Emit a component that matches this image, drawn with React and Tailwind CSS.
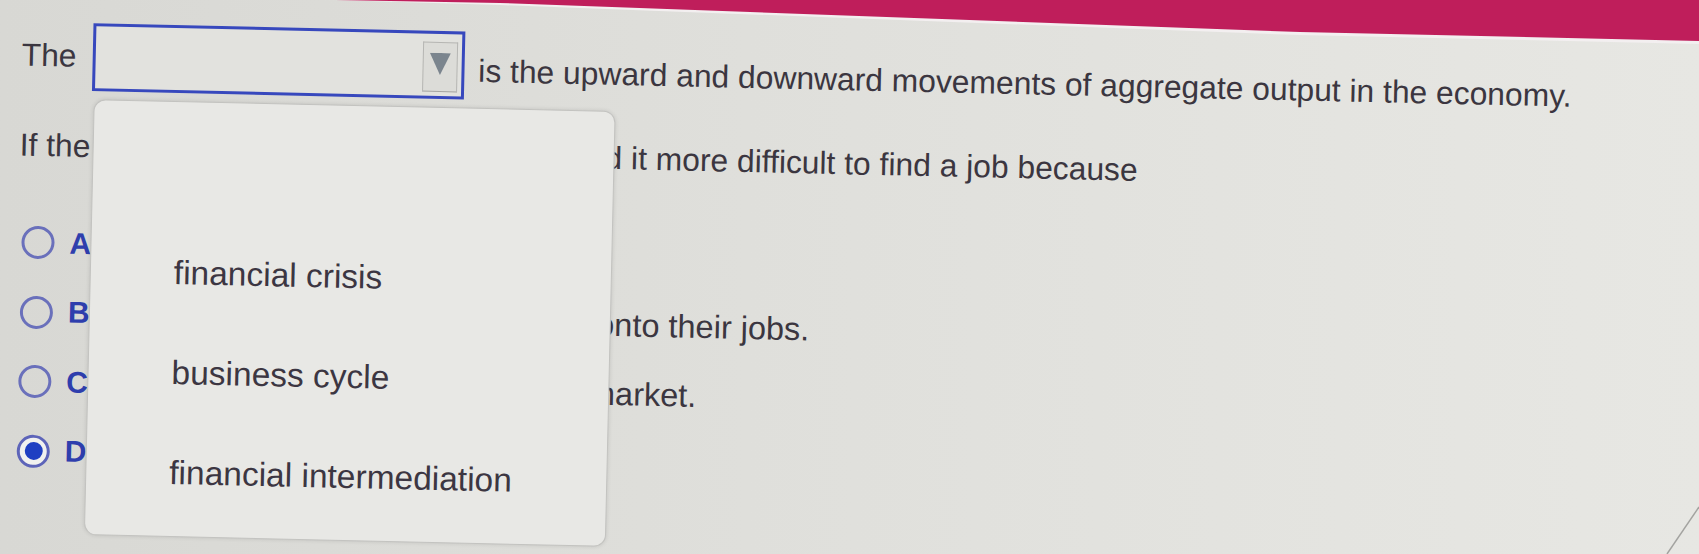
export default function App() {
  const rows = [
    { l: "A", t: "Workers would lose their jobs.", sel: false, gap: "ml-[14px]" },
    { l: "B", t: "People who have jobs would hold onto their jobs.", sel: false, gap: "ml-[16px]" },
    { l: "C", t: "More people would join the labor market.", sel: false, gap: "ml-[22px]" },
    { l: "D", t: "All of the above.", sel: true, gap: "ml-[14px]" },
  ];
  return (
    <div className="relative w-[1699px] h-[554px] overflow-hidden bg-linear-to-r from-[#d8d8d4] via-[#e0e0dc] to-[#e7e7e3] text-[#3b3640] font-['Liberation_Sans',Arial,sans-serif]">
      <div className="relative rotate-[1.3deg] origin-top-left pl-[23px] pt-[21px]">
        <div className="flex items-start text-[31.8px] leading-none">
          <span className="mt-[18px]">The</span>
          <div className="ml-[16px] w-[372px] h-[68px] shrink-0 border-[3px] border-[#3748bd] bg-[#e2e2de] flex items-center justify-end pr-[4px]">
            <div className="w-[35px] h-[50px] mt-[4px] border border-[#b6b6b3] border-b-[#a5a5a2] bg-[#dcdcd8] flex justify-center pt-[10px]">
              <svg width="21" height="22" viewBox="0 0 21 22">
                <polygon points="0,0 21,0 10.5,22" fill="#7b858e" />
              </svg>
            </div>
          </div>
          <span className="ml-[14px] mt-[24px] whitespace-nowrap">
            is the upward and downward movements of aggregate output in the economy.
          </span>
        </div>
        <div className="mt-[40px] text-[31.8px] leading-none whitespace-nowrap">
          If the economy slows down, you would find it more difficult to find a job because
        </div>
        <div className="mt-[46px] flex flex-col">
          {rows.map((r) => (
            <div key={r.l} className="h-[69.5px] flex items-center">
              {r.sel ? (
                <div className="ml-[4px] w-[33px] h-[33px] rounded-full border-[3px] border-[#5d64b9] bg-[#f1f1ef] flex items-center justify-center">
                  <div className="w-[18px] h-[18px] rounded-full bg-[#1f3fc2]" />
                </div>
              ) : (
                <div className="ml-[4px] w-[33px] h-[33px] rounded-full border-[3px] border-[#6a70bb]" />
              )}
              <span className="ml-[15px] w-[21px] font-bold text-[30px] leading-none text-[#2e3ead]">
                {r.l}
              </span>
              <span className={`${r.gap} text-[32.5px] leading-none whitespace-nowrap`}>{r.t}</span>
            </div>
          ))}
        </div>
        <div className="absolute left-[96px] top-[97px] w-[522px] h-[436px] rounded-[12px] bg-[#e8e8e5] border border-[#c3c3c0] shadow-[0_0_4px_rgba(0,0,0,0.12)] pl-[83px] pt-[121px] text-[33.5px] leading-none text-[#3c3642]">
          <div className="h-[100px] flex items-center">financial crisis</div>
          <div className="h-[100px] flex items-center">business cycle</div>
          <div className="h-[100px] flex items-center">financial intermediation</div>
        </div>
      </div>
      <div className="absolute inset-x-0 top-0 h-[48px] bg-[#f3eff0] [clip-path:polygon(335px_0,500px_5px,1300px_35px,1699px_44px,1699px_0)]" />
      <div className="absolute inset-x-0 top-0 h-[48px] bg-[#bf1e5b] [clip-path:polygon(335px_0,500px_3px,1300px_32px,1699px_41px,1699px_0)]" />
      <svg className="absolute left-[1660px] top-[500px]" width="39" height="54" viewBox="0 0 39 54">
        <line x1="39" y1="7" x2="7" y2="54" stroke="#a3a3a0" strokeWidth="1.5" />
      </svg>
    </div>
  );
}
